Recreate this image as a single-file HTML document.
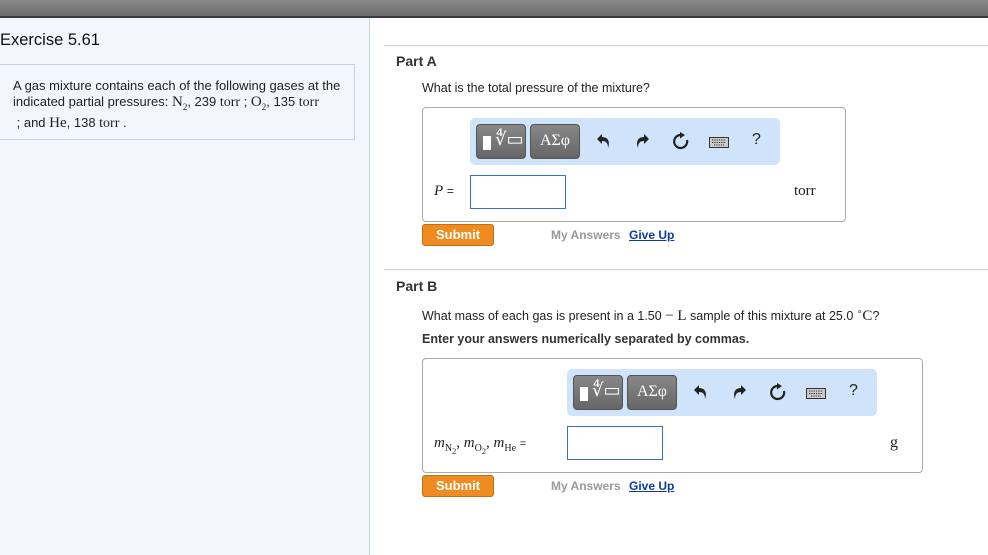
<!DOCTYPE html>
<html><head><style>
body{margin:0;width:988px;height:555px;position:relative;font-family:"Liberation Sans",sans-serif;background:#fff;overflow:hidden;color:#222}
.a{position:absolute}
.top{left:0;top:0;width:988px;height:16px;background:linear-gradient(#8a8a8a,#6a6a6a);border-bottom:2px solid #3a3a3a}
.left{left:0;top:18px;width:369px;height:537px;background:#f2f7fd;border-right:1px solid #c8d4e0}
.serif{font-family:"Liberation Serif",serif}
.box{border:1px solid #aaa;border-radius:4px;background:#fff}
.tb{background:#cfe4fb;border-radius:5px}
.btn{background:linear-gradient(#888,#666);border:1px solid #555;border-radius:4px;color:#fff;top:6px;height:33px;width:48px}
.inp{border:1px solid #3a6fd0;background:#fff}
.sub{background:#ee8c22;border:1px solid #c56f10;border-radius:3px;color:#fff;font-weight:bold;font-size:13px;text-align:center;line-height:20px;width:70px;height:20px}
.my{color:#999;font-weight:bold;font-size:12px}
.gu{color:#0b3aa5;font-weight:bold;font-size:12px;text-decoration:underline}
.ic{top:14px}
.hr{height:1px;background:#ccc;left:384px;width:604px}
</style></head><body>
<div class="a top"></div>
<div class="a left"></div>
<div class="a" style="left:0;top:31px;font-size:16.5px;color:#111">Exercise 5.61</div>
<div class="a" style="left:0;top:64px;width:354px;height:74px;border:1px solid #c3d3e3;border-left:none;background:#f2f7fd"></div>
<div class="a" style="left:13px;top:78px;font-size:13px;line-height:15.5px;width:345px;color:#222">A gas mixture contains each of the following gases at the indicated partial pressures: <span class="serif" style="font-size:15px">N<sub style="font-size:9px">2</sub></span>, 239 <span class="serif" style="font-size:14px">torr</span> ; <span class="serif" style="font-size:15px">O<sub style="font-size:9px">2</sub></span>, 135 <span class="serif" style="font-size:14px">torr</span><br>&nbsp;; and <span class="serif" style="font-size:15px">He</span>, 138 <span class="serif" style="font-size:14px">torr</span> .</div>

<div class="a hr" style="top:45px"></div>
<div class="a" style="left:396px;top:53px;font-size:14px;font-weight:bold;color:#333">Part A</div>
<div class="a" style="left:422px;top:81px;font-size:12.5px">What is the total pressure of the mixture?</div>
<div class="a box" style="left:422px;top:107px;width:422px;height:113px">
 <div class="a tb" style="left:47px;top:10px;width:310px;height:47px">
  <div class="a btn" style="left:6px"><div class="a" style="left:6px;top:11px;width:8px;height:14px;background:#fff"></div><span class="a serif" style="left:18px;top:4px;font-size:18px">∜▭</span></div>
  <div class="a btn serif" style="left:60px;font-size:16px;text-align:center;line-height:32px">ΑΣφ</div>
  <svg class="a ic" style="left:126px" width="16" height="18" viewBox="0 0 16 18"><path d="M6 2 L1 7 L6 12 L6 9 C10 9 12 11 12 16 C14 11 13 5 6 5 Z" fill="#222"/></svg>
  <svg class="a ic" style="left:164px" width="16" height="18" viewBox="0 0 16 18"><path d="M10 2 L15 7 L10 12 L10 9 C6 9 4 11 4 16 C2 11 3 5 10 5 Z" fill="#222"/></svg>
  <svg class="a ic" style="left:202px" width="18" height="18" viewBox="0 0 18 18"><path d="M9 3 A6.5 6.5 0 1 0 15 8" fill="none" stroke="#222" stroke-width="2.2"/><path d="M8 0 L13 3 L8 6.5 Z" fill="#222"/></svg>
  <svg class="a" style="left:239px;top:19px" width="20" height="11" viewBox="0 0 20 11"><rect x="0.5" y="0.5" width="19" height="10" fill="#ccc" stroke="#333"/><path d="M3 3h14M3 5.5h14M5 8h10" stroke="#333" stroke-width="1" stroke-dasharray="1.3 1"/></svg>
  <div class="a" style="left:282px;top:13px;font-size:16px">?</div>
 </div>
 <div class="a serif" style="left:11px;top:75px;font-size:15px"><i>P</i> <span style="font-family:'Liberation Sans';font-size:12px">=</span></div>
 <div class="a inp" style="left:47px;top:67px;width:94px;height:32px"></div>
 <div class="a serif" style="left:371px;top:75px;font-size:15px">torr</div>
</div>
<div class="a sub" style="left:422px;top:224px">Submit</div>
<div class="a my" style="left:551px;top:228px">My Answers</div>
<div class="a gu" style="left:629px;top:228px">Give Up</div>

<div class="a hr" style="top:269px"></div>
<div class="a" style="left:396px;top:278px;font-size:14px;font-weight:bold;color:#333">Part B</div>
<div class="a" style="left:422px;top:306px;font-size:12.5px">What mass of each gas is present in a 1.50 <span class="serif" style="font-size:15px">− L</span> sample of this mixture at 25.0 <span class="serif" style="font-size:15px"><sup style="font-size:9px">∘</sup>C</span>?</div>
<div class="a" style="left:422px;top:332px;font-size:12.5px;font-weight:bold;color:#333">Enter your answers numerically separated by commas.</div>
<div class="a box" style="left:422px;top:358px;width:499px;height:113px">
 <div class="a tb" style="left:144px;top:10px;width:310px;height:47px">
  <div class="a btn" style="left:6px"><div class="a" style="left:6px;top:11px;width:8px;height:14px;background:#fff"></div><span class="a serif" style="left:18px;top:4px;font-size:18px">∜▭</span></div>
  <div class="a btn serif" style="left:60px;font-size:16px;text-align:center;line-height:32px">ΑΣφ</div>
  <svg class="a ic" style="left:126px" width="16" height="18" viewBox="0 0 16 18"><path d="M6 2 L1 7 L6 12 L6 9 C10 9 12 11 12 16 C14 11 13 5 6 5 Z" fill="#222"/></svg>
  <svg class="a ic" style="left:164px" width="16" height="18" viewBox="0 0 16 18"><path d="M10 2 L15 7 L10 12 L10 9 C6 9 4 11 4 16 C2 11 3 5 10 5 Z" fill="#222"/></svg>
  <svg class="a ic" style="left:202px" width="18" height="18" viewBox="0 0 18 18"><path d="M9 3 A6.5 6.5 0 1 0 15 8" fill="none" stroke="#222" stroke-width="2.2"/><path d="M8 0 L13 3 L8 6.5 Z" fill="#222"/></svg>
  <svg class="a" style="left:239px;top:19px" width="20" height="11" viewBox="0 0 20 11"><rect x="0.5" y="0.5" width="19" height="10" fill="#ccc" stroke="#333"/><path d="M3 3h14M3 5.5h14M5 8h10" stroke="#333" stroke-width="1" stroke-dasharray="1.3 1"/></svg>
  <div class="a" style="left:282px;top:13px;font-size:16px">?</div>
 </div>
 <div class="a serif" style="left:11px;top:76px;font-size:15px"><i>m</i><sub style="font-size:10px">N<sub>2</sub></sub>, <i>m</i><sub style="font-size:10px">O<sub>2</sub></sub>, <i>m</i><sub style="font-size:10px">He</sub> <span style="font-family:'Liberation Sans';font-size:11px">=</span></div>
 <div class="a inp" style="left:144px;top:67px;width:94px;height:32px"></div>
 <div class="a serif" style="left:467px;top:75px;font-size:16px">g</div>
</div>
<div class="a sub" style="left:422px;top:475px">Submit</div>
<div class="a my" style="left:551px;top:479px">My Answers</div>
<div class="a gu" style="left:629px;top:479px">Give Up</div>
</body></html>
